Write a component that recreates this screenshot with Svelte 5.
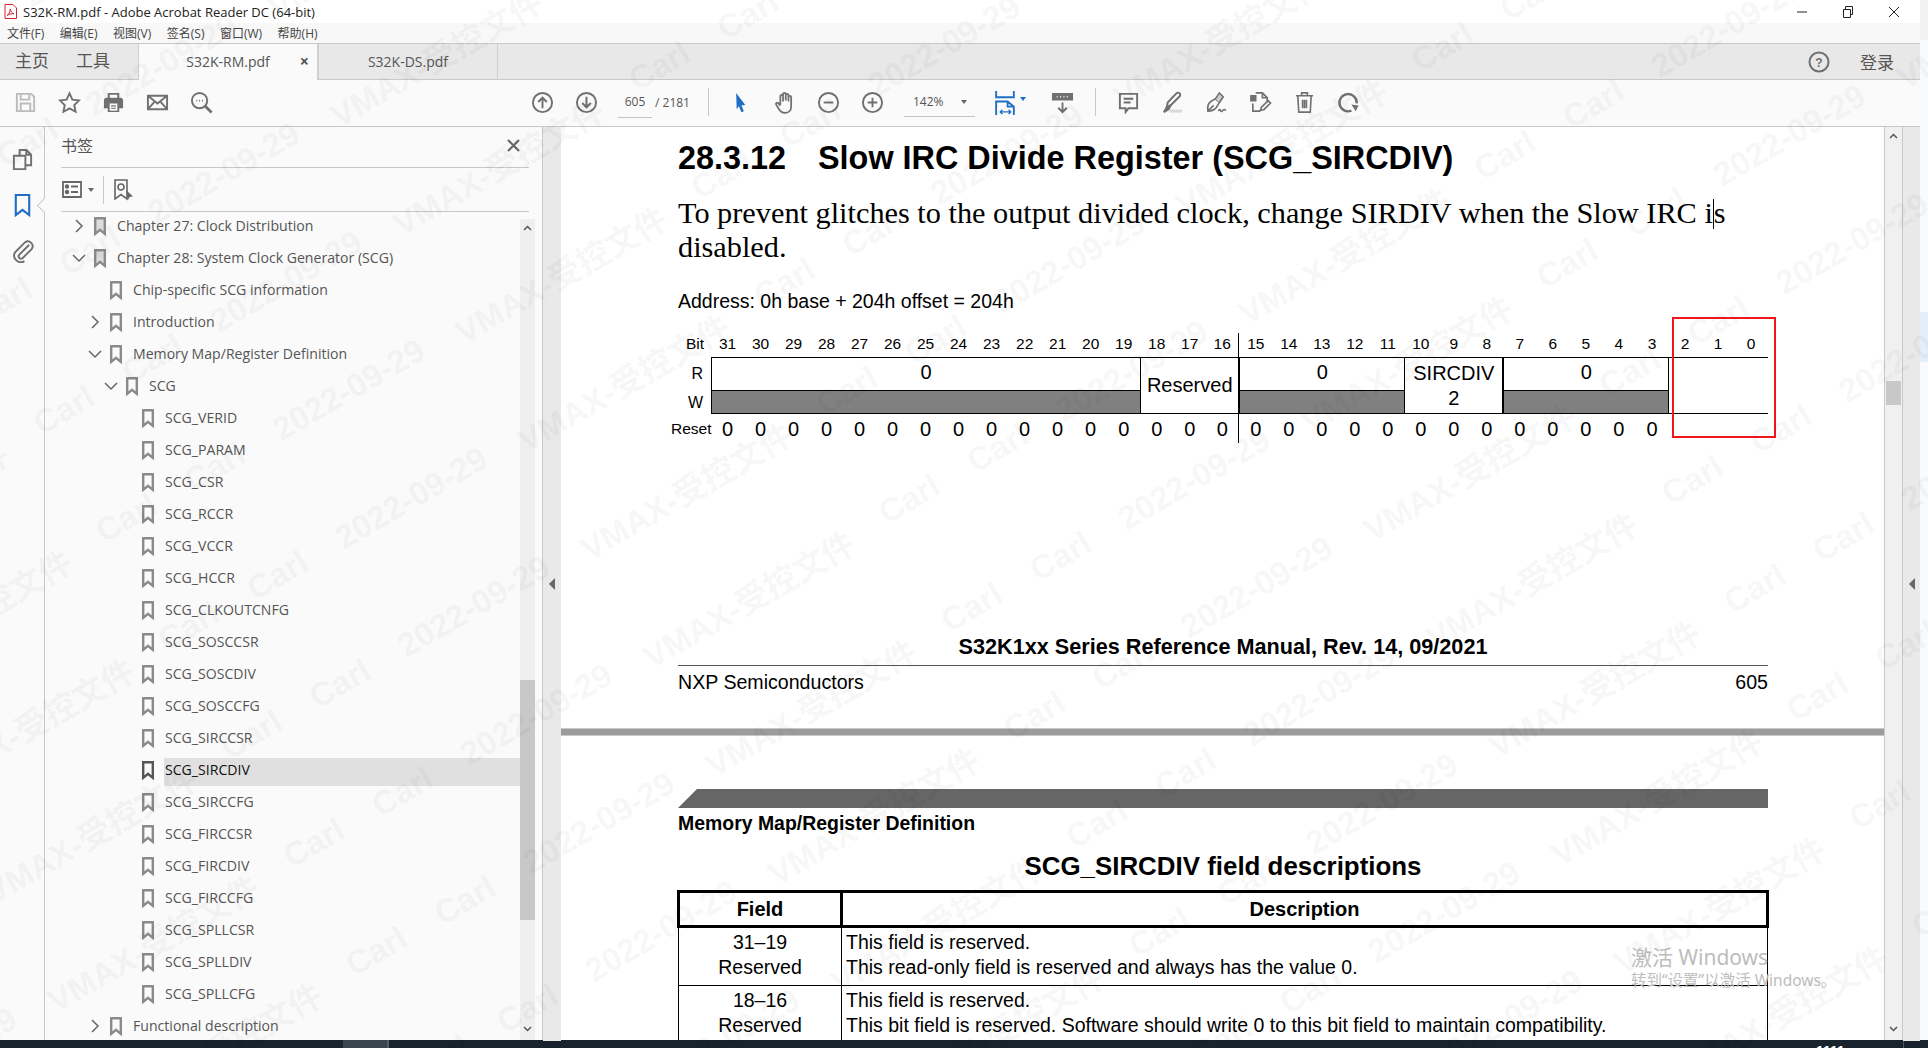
<script>
  const menus = ["文件(F)", "编辑(E)", "视图(V)", "签名(S)", "窗口(W)", "帮助(H)"];

  const tree = [
    { label: "Chapter 27: Clock Distribution", level: 0, chev: "r", fill: true },
    { label: "Chapter 28: System Clock Generator (SCG)", level: 0, chev: "d", fill: true },
    { label: "Chip-specific SCG information", level: 1 },
    { label: "Introduction", level: 1, chev: "r" },
    { label: "Memory Map/Register Definition", level: 1, chev: "d" },
    { label: "SCG", level: 2, chev: "d" },
    { label: "SCG_VERID", level: 3 },
    { label: "SCG_PARAM", level: 3 },
    { label: "SCG_CSR", level: 3 },
    { label: "SCG_RCCR", level: 3 },
    { label: "SCG_VCCR", level: 3 },
    { label: "SCG_HCCR", level: 3 },
    { label: "SCG_CLKOUTCNFG", level: 3 },
    { label: "SCG_SOSCCSR", level: 3 },
    { label: "SCG_SOSCDIV", level: 3 },
    { label: "SCG_SOSCCFG", level: 3 },
    { label: "SCG_SIRCCSR", level: 3 },
    { label: "SCG_SIRCDIV", level: 3, selected: true },
    { label: "SCG_SIRCCFG", level: 3 },
    { label: "SCG_FIRCCSR", level: 3 },
    { label: "SCG_FIRCDIV", level: 3 },
    { label: "SCG_FIRCCFG", level: 3 },
    { label: "SCG_SPLLCSR", level: 3 },
    { label: "SCG_SPLLDIV", level: 3 },
    { label: "SCG_SPLLCFG", level: 3 },
    { label: "Functional description", level: 1, chev: "r" }
  ];

  const bits = Array.from({ length: 32 }, (_, i) => 31 - i);
  const wmRows = Array.from({ length: 20 }, (_, i) => i);
  const wmCols = Array.from({ length: 7 }, (_, i) => i);
</script>

<div class="app">
  <div class="top">
    <div class="window">
      <div class="titlebar">
        <svg class="pdf" width="13" height="15" viewBox="0 0 13 15">
          <path d="M1 .5h8l3.500 3.500v10.500H1z" fill="#fff" stroke="#d8232a" />
          <path d="M3 11.500c2-1 3-3.500 3.300-6.500.5 2.500 1.500 4 3.700 4.800-2.500-.3-5 .3-7 1.700z" fill="none" stroke="#d8232a" />
        </svg>
        <span class="title-text">S32K-RM.pdf - Adobe Acrobat Reader DC (64-bit)</span>
        <div class="winctl">
          <svg width="12" height="12" viewBox="0 0 12 12"><path d="M1 6h10" stroke="#222" /></svg>
          <svg width="12" height="12" viewBox="0 0 12 12" fill="none" stroke="#222"><path d="M1.500 3.500h7v8h-7zM3.500 3.500v-3h7v8h-2" /></svg>
          <svg width="12" height="12" viewBox="0 0 12 12" stroke="#222"><path d="M1 1l10 10M11 1L1 11" /></svg>
        </div>
      </div>

      <div class="menubar">
        {#each menus as m}<span>{m}</span>{/each}
      </div>

      <div class="tabbar">
        <span class="nav-tab first">主页</span>
        <span class="nav-tab">工具</span>
        <div class="doc-tab active">
          <span>S32K-RM.pdf</span>
          <b class="tab-x">×</b>
        </div>
        <div class="doc-tab"><span>S32K-DS.pdf</span></div>
        <div class="tab-right">
          <svg width="22" height="22" viewBox="0 0 22 22">
            <circle cx="11" cy="11" r="9.500" fill="none" stroke="#707070" stroke-width="2" />
            <text x="11" y="15.500" text-anchor="middle" font-size="12" font-weight="700" fill="#707070" font-family="Liberation Sans">?</text>
          </svg>
          <span class="login">登录</span>
        </div>
      </div>

      <div class="toolbar">
        <div class="tb save">
          <svg viewBox="0 0 24 24" class="ic light"><path d="M3 3h15l3 3v15H3zM7 3v6h9V3M7 21v-8h10v8" /></svg>
        </div>
        <div class="tb">
          <svg viewBox="0 0 24 24" class="ic"><path d="M12 2.500L15 9l7 .8-5 4.900 1.300 7-6.300-3.500-6.300 3.500 1.300-7-5-4.900L9 9z" /></svg>
        </div>
        <div class="tb">
          <svg viewBox="0 0 24 24" class="ic"><path d="M7 8V3h10v5" /><path d="M5 8h14a2 2 0 0 1 2 2v7h-4v4H7v-4H3v-7a2 2 0 0 1 2-2z" fill="#707070" /><path d="M8 13h8v7.500H8z" fill="#fafafa" stroke="none" /><path d="M9.500 15.500h5M9.500 18h5" stroke-width="1.200" /></svg>
        </div>
        <div class="tb">
          <svg viewBox="0 0 24 24" class="ic"><path d="M2 5h20v14H2zM2 5l10 8 10-8M2 19l7.500-8.500M22 19l-7.500-8.500" /></svg>
        </div>
        <div class="tb">
          <svg viewBox="0 0 24 24" class="ic"><circle cx="10" cy="10" r="8" /><path d="M16 16l6.500 6.500" stroke-width="3" /><path d="M6.500 10h1M9.500 10h1M12.500 10h1" /></svg>
        </div>

        <div class="tb gap-page">
          <svg viewBox="0 0 24 24" class="ic"><circle cx="12" cy="12" r="10" /><path d="M12 18V7M7.500 11.500L12 7l4.500 4.500" /></svg>
        </div>
        <div class="tb">
          <svg viewBox="0 0 24 24" class="ic"><circle cx="12" cy="12" r="10" /><path d="M12 6v11M7.500 12.500L12 17l4.500-4.500" /></svg>
        </div>
        <div class="page-box">605</div>
        <div class="page-total">/ 2181</div>
        <div class="tb-sep first-sep"></div>
        <div class="tb cursor">
          <svg viewBox="0 0 24 24" class="ic"><path d="M7.500 2l9.500 12.500-4 .5 2.500 6-2.500 1.200-2.700-6.200-2.300 3z" fill="#1f6fc4" stroke="none" /></svg>
        </div>
        <div class="tb">
          <svg viewBox="0 0 24 24" class="ic thin big"><path d="M8 14V6a1.300 1.300 0 0 1 2.600 0v5M10.600 10V4a1.300 1.300 0 0 1 2.600 0v6M13.200 10V5a1.300 1.300 0 0 1 2.600 0v6M15.800 11V7a1.300 1.300 0 0 1 2.600 0v9c0 3.500-2.500 6-6 6s-4.500-1.500-6-4L4 14c-.8-1.300.8-2.500 2-1.400L8 15" /></svg>
        </div>
        <div class="tb">
          <svg viewBox="0 0 24 24" class="ic"><circle cx="12" cy="12" r="10" /><path d="M7 12h10" /></svg>
        </div>
        <div class="tb">
          <svg viewBox="0 0 24 24" class="ic"><circle cx="12" cy="12" r="10" /><path d="M7 12h10M12 7v10" /></svg>
        </div>
        <div class="zoom-box"><span>142%</span><i class="tri"></i></div>
        <div class="tb fit">
          <svg viewBox="0 0 24 24" class="ic blue big"><path d="M3 1v6h17V1M3 24V11h11l6 5v8M14 11v5h6" stroke-width="1.800" /><path d="M7 21h10M9 19l-2 2 2 2M15 19l2 2-2 2" stroke-width="1.300" /></svg>
          <i class="tri blue-tri"></i>
        </div>
        <div class="tb scroll">
          <svg viewBox="0 0 24 24" class="ic"><path d="M2 3h20v6H2z" fill="#707070" /><path d="M6 6h1M9.500 6h1M13 6h1M16.500 6h1" stroke="#fafafa" stroke-width="1.500" /><path d="M12 12v10M7.500 17.500L12 22l4.500-4.500" /></svg>
        </div>
        <div class="tb-sep"></div>
        <div class="tb">
          <svg viewBox="0 0 24 24" class="ic"><path d="M3 3h18v15h-9l-3 4v-4H3zM7 8h10M7 12h7" /></svg>
        </div>
        <div class="tb">
          <svg viewBox="0 0 24 24" class="ic"><path d="M6 17l1-5L16 2.500a2 2 0 0 1 3.500 3L10 15z" /><path d="M3 22l3-5 4-2-2 4z" fill="#707070" /><path d="M9 21h13" stroke="#d9d9d9" stroke-width="3" /></svg>
        </div>
        <div class="tb">
          <svg viewBox="0 0 24 24" class="ic thin"><path d="M3 21c-.5-4 0-8 3-10l5-3 4 4-3 5c-2 3-5 4-9 4zM3 21l6-6" /><path d="M11 8l4-6 4 4-4 6" fill="#d0d0d0" /><path d="M14 21c1-2 2-2 2.500-.5s1.500 1 2.500-.5 1.500 0 3 0" /></svg>
        </div>
        <div class="tb">
          <svg viewBox="0 0 24 24" class="ic thin"><path d="M2 5h5v5H2z" fill="#707070" /><path d="M7 2h7l5 5v5M14 2v5h5M4 13v8h8" /><path d="M12 20l1-3 7-7 2.500 2.500-7 7z" /></svg>
        </div>
        <div class="tb">
          <svg viewBox="0 0 24 24" class="ic thin"><path d="M3 5h18M9 5V2h6v3M5 5l1 17h12l1-17M10 9v9M12 9v9M14 9v9" /></svg>
        </div>
        <div class="tb">
          <svg viewBox="0 0 24 24" class="ic"><path d="M15 20.500A9 9 0 1 1 20.500 13" stroke-width="2.500" /><path d="M15 14l7.500 1-3 6z" fill="#707070" stroke="none" /></svg>
        </div>
      </div>

      <div class="main">
        <div class="rail">
          <svg viewBox="0 0 24 24" class="rail-ic"><path d="M9 8V2h7l5 5v11h-6M16 2v5h5" fill="none" /><path d="M3 8h12v14H3z" fill="none" /></svg>
          <svg viewBox="0 0 24 24" class="rail-ic bm"><path d="M5 1h14v21l-7-5.500L5 22z" /></svg>
          <svg viewBox="0 0 24 24" class="rail-ic clip"><path d="M19 6L8.500 16.500a2.500 2.500 0 0 0 3.500 3.500L21.500 10.500a5 5 0 0 0-7-7L4 14a7 7 0 0 0 10 9" transform="translate(0 -1)" /></svg>
        </div>

        <div class="panel">
          <div class="panel-head">
            <span class="panel-title">书签</span>
            <svg width="13" height="13" viewBox="0 0 13 13" stroke="#666" stroke-width="2.200"><path d="M1 1l11 11M12 1L1 12" /></svg>
          </div>
          <div class="panel-tools">
            <svg width="20" height="17" viewBox="0 0 20 17" fill="none" stroke="#666" stroke-width="1.800">
              <path d="M1 1h18v15H1z" /><path d="M9 5.500h7M9 11h7" /><circle cx="5" cy="5.500" r="1.300" fill="#666" /><circle cx="5" cy="11" r="1.300" fill="#666" />
            </svg>
            <i class="tri small"></i>
            <div class="tool-sep"></div>
            <svg width="20" height="22" viewBox="0 0 20 22" fill="none" stroke="#666" stroke-width="1.600">
              <path d="M1 1h12v19l-6-4.500L1 20z" /><circle cx="7" cy="8" r="3" />
              <path d="M12 11l7 6.500-3.500.5-1.500 3z" fill="#666" stroke="none" />
            </svg>
          </div>

          <div class="panel-body">
            <div class="tree">
              {#each tree as row}
                <div class="row" class:l1={row.level === 1} class:l2={row.level === 2} class:l3={row.level === 3} class:sel={row.selected}>
                  <span class="chev">
                    {#if row.chev === "r"}
                      <svg width="10" height="14" viewBox="0 0 10 14" fill="none" stroke="#666" stroke-width="1.500"><path d="M2 1l6 6-6 6" /></svg>
                    {:else if row.chev === "d"}
                      <svg width="14" height="10" viewBox="0 0 14 10" fill="none" stroke="#666" stroke-width="1.500"><path d="M1 2l6 6 6-6" /></svg>
                    {/if}
                  </span>
                  <svg class="mark" width="12" height="19" viewBox="0 0 12 19">
                    <path d="M1.200 1.200h9.600v15.600l-4.800-4-4.800 4z" fill={row.fill ? "#dcdcdc" : "none"} stroke={row.selected ? "#555" : "#8a8a8a"} stroke-width="2.400" />
                  </svg>
                  <span class="label">{row.label}</span>
                </div>
              {/each}
            </div>
            <div class="pscroll">
              <svg class="sarrow" width="9" height="6" viewBox="0 0 9 6" fill="none" stroke="#555" stroke-width="1.500"><path d="M1 5l3.500-3.500L8 5" /></svg>
              <div class="pthumb"></div>
              <svg class="sarrow down" width="9" height="6" viewBox="0 0 9 6" fill="none" stroke="#555" stroke-width="1.500"><path d="M1 1l3.500 3.500L8 1" /></svg>
            </div>
          </div>
        </div>

        <div class="collapse"><i class="left-tri"></i></div>

        <div class="doc">
          <div class="page">
            <h1 class="heading"><span class="num">28.3.12</span>Slow IRC Divide Register (SCG_SIRCDIV)</h1>
            <p class="para">To prevent glitches to the output divided clock, change SIRDIV when the Slow IRC i<span class="caret"></span>s disabled.</p>
            <div class="addr">Address: 0h base + 204h offset = 204h</div>

            <div class="reg">
              <div class="lab">Bit</div>
              {#each bits as b}
                <div class="bit" class:mid={b === 16}>{b}</div>
              {/each}

              <div class="lab r">R</div>
              <div class="f-top a">0</div>
              <div class="f-span b"><span>Reserved</span></div>
              <div class="f-top c">0</div>
              <div class="f-span d"><span>SIRCDIV</span><span>2</span></div>
              <div class="f-top e">0</div>
              <div class="f-blank"></div>

              <div class="lab w">W</div>
              <div class="f-w a"></div>
              <div class="f-w c"></div>
              <div class="f-w e"></div>

              <div class="lab rst">Reset</div>
              {#each bits as b}
                <div class="zero" class:mid={b === 16}>{b > 2 ? 0 : ""}</div>
              {/each}

              <div class="red"></div>
            </div>

            <div class="manual">S32K1xx Series Reference Manual, Rev. 14, 09/2021</div>
            <div class="foot"><span>NXP Semiconductors</span><span>605</span></div>
          </div>

          <div class="page-gap"></div>

          <div class="page">
            <div class="slant"></div>
            <div class="section">Memory Map/Register Definition</div>
            <div class="caption">SCG_SIRCDIV field descriptions</div>
            <table class="fields">
              <thead>
                <tr><th class="col-a">Field</th><th>Description</th></tr>
              </thead>
              <tbody>
                <tr>
                  <td class="col-a">31–19<br />Reserved</td>
                  <td>This field is reserved.<br />This read-only field is reserved and always has the value 0.</td>
                </tr>
                <tr>
                  <td class="col-a">18–16<br />Reserved</td>
                  <td>This field is reserved.<br />This bit field is reserved. Software should write 0 to this bit field to maintain compatibility.</td>
                </tr>
              </tbody>
            </table>
          </div>
        </div>

        <div class="vscroll">
          <svg width="9" height="6" viewBox="0 0 9 6" fill="none" stroke="#555" stroke-width="1.500"><path d="M1 5l3.500-3.500L8 5" /></svg>
          <div class="vthumb"></div>
          <svg class="sarrow down" width="9" height="6" viewBox="0 0 9 6" fill="none" stroke="#555" stroke-width="1.500"><path d="M1 1l3.500 3.500L8 1" /></svg>
        </div>
        <div class="collapse right"><i class="left-tri"></i></div>
      </div>
    </div>

    <div class="edge">
      <div class="edge-top"></div>
      <div class="edge-blue"></div>
    </div>
  </div>

  <div class="taskbar">
    <div class="task-active"></div>
    <div class="task-clock"><span>1111</span></div>
    <div class="task-line"></div>
  </div>

  <div class="activate">
    <div class="a1">激活 Windows</div>
    <div class="a2">转到“设置”以激活 Windows。</div>
  </div>

  <div class="wm">
    <div class="wm-inner">
      {#each wmRows as r}
        <div class="wm-line">
          {#each wmCols as c}
            <span>VMAX-受控文件</span><span>Carl</span><span>Carl</span><span>2022-09-29</span>
          {/each}
        </div>
      {/each}
    </div>
  </div>
</div>

<style>
  :global(body) {
    margin: 0;
    background: #fff;
  }

  .app {
    position: relative;
    display: flex;
    flex-direction: column;
    width: 1928px;
    height: 1048px;
    overflow: hidden;
    font-family: "Open Sans", "Noto Sans", "Noto Sans CJK SC", sans-serif;
    color: #444;
  }

  .top {
    display: flex;
    flex: 1;
    min-height: 0;
  }

  .window {
    display: flex;
    flex-direction: column;
    width: 1920px;
    min-height: 0;
  }

  .edge {
    flex: 1;
    background: #f8fafd;
    display: flex;
    flex-direction: column;
  }

  .edge-top {
    height: 40px;
    background: #f2f2f2;
  }

  .edge-blue {
    height: 50px;
    margin-top: 272px;
    background: #e4eefb;
  }

  /* window chrome */
  .titlebar {
    display: flex;
    align-items: center;
    height: 23px;
    background: #fff;
    padding-left: 4px;
  }

  .pdf {
    margin-right: 6px;
  }

  .title-text {
    font-size: 13px;
    color: #222;
  }

  .winctl {
    display: flex;
    gap: 34px;
    margin-left: auto;
    margin-right: 20px;
  }

  .menubar {
    display: flex;
    align-items: center;
    gap: 15.500px;
    height: 20px;
    padding-left: 7px;
    background: #f8f8f8;
    font-size: 12px;
    color: #444;
  }

  .tabbar {
    display: flex;
    align-items: stretch;
    height: 37px;
    box-sizing: border-box;
    border-top: 1px solid #c8c8c8;
    border-bottom: 1px solid #c8c8c8;
    background: #e8e8e8;
  }

  .nav-tab {
    font-size: 17px;
    line-height: 34px;
    width: 61px;
    text-align: left;
    color: #555;
  }

  .nav-tab.first {
    margin-left: 15px;
  }

  .doc-tab {
    position: relative;
    width: 180px;
    margin-bottom: -1px;
    box-sizing: border-box;
    border-left: 1px solid #d0d0d0;
    border-right: 1px solid #d0d0d0;
    text-align: center;
    font-size: 14px;
    line-height: 35px;
    color: #555;
  }

  .doc-tab.active {
    margin-left: 1px;
    background: #fafafa;
  }

  .tab-x {
    position: absolute;
    right: 8px;
    top: 0;
    font-size: 16px;
    color: #555;
  }

  .tab-right {
    display: flex;
    align-items: center;
    margin-left: auto;
    margin-right: 26px;
    gap: 30px;
  }

  .login {
    font-size: 17px;
    color: #555;
  }

  .toolbar {
    display: flex;
    align-items: center;
    height: 47px;
    box-sizing: border-box;
    border-bottom: 1px solid #c8c8c8;
    background: #fafafa;
    padding: 0 0 2px 3px;
    flex-shrink: 0;
  }

  .tb {
    display: flex;
    align-items: center;
    justify-content: center;
    width: 44px;
    height: 44px;
    flex-shrink: 0;
  }

  .ic {
    width: 23px;
    height: 23px;
    fill: none;
    stroke: #707070;
    stroke-width: 2;
  }

  .ic.big {
    width: 25px;
    height: 25px;
  }

  .ic.light {
    stroke: #bcbcbc;
  }

  .ic.thin {
    stroke-width: 1.700;
  }

  .ic.blue {
    stroke: #1f6fc4;
  }

  .gap-page {
    margin-left: 297px;
  }

  .page-box {
    width: 34px;
    margin-left: 10px;
    border-bottom: 1px solid #c4c4c4;
    text-align: center;
    font-size: 12px;
    line-height: 30px;
    color: #555;
  }

  .page-total {
    margin-left: 3px;
    width: 53px;
    font-size: 12px;
    color: #555;
  }

  .tb-sep {
    width: 1px;
    height: 28px;
    background: #c8c8c8;
    flex-shrink: 0;
  }

  .first-sep + .cursor {
    margin-left: 9px;
  }

  .zoom-box {
    display: flex;
    align-items: center;
    justify-content: space-between;
    box-sizing: border-box;
    width: 71px;
    height: 30px;
    margin-left: 10px;
    padding: 0 8px 0 9px;
    border-bottom: 1px solid #c4c4c4;
    font-size: 12px;
    color: #555;
  }

  .tri {
    display: block;
    width: 0;
    height: 0;
    border-left: 3.500px solid transparent;
    border-right: 3.500px solid transparent;
    border-top: 4px solid #666;
  }

  .tri.small {
    margin-left: 6px;
  }

  .tri.blue-tri {
    border-top-color: #1f6fc4;
    margin-left: 2px;
    margin-top: -6px;
  }

  .fit {
    margin-left: 9px;
    width: 46px;
    justify-content: flex-start;
    padding-left: 9px;
    box-sizing: border-box;
  }

  .scroll {
    margin-left: 10px;
  }

  .scroll + .tb-sep {
    margin-left: 11px;
    margin-right: 10px;
  }

  /* main area */
  .main {
    position: relative;
    display: flex;
    flex: 1;
    min-height: 0;
  }

  .rail {
    position: relative;
    display: flex;
    flex-direction: column;
    align-items: center;
    gap: 23px;
    box-sizing: border-box;
    width: 45px;
    padding: 21px 0 0 0;
    background: #fafafa;
    border-right: 1px solid #c8c8c8;
    flex-shrink: 0;
  }

  .rail::after {
    content: "";
    position: absolute;
    right: -6px;
    top: 73px;
    width: 10px;
    height: 10px;
    background: #fafafa;
    border-left: 1px solid #c8c8c8;
    border-bottom: 1px solid #c8c8c8;
    transform: rotate(45deg);
  }

  .rail-ic {
    width: 23px;
    height: 23px;
    fill: none;
    stroke: #707070;
    stroke-width: 2;
  }

  .rail-ic.bm {
    stroke: #1f6fc4;
    stroke-width: 2.200;
  }

  .panel {
    display: flex;
    flex-direction: column;
    width: 497px;
    background: #fafafa;
    border-right: 1px solid #c8c8c8;
    min-height: 0;
    flex-shrink: 0;
  }

  .panel-head {
    display: flex;
    align-items: center;
    justify-content: space-between;
    height: 41px;
    box-sizing: border-box;
    margin: 0 13px 0 16px;
    padding: 0 9px 4px 0;
    border-bottom: 1px solid #c8c8c8;
  }

  .panel-title {
    font-size: 16px;
    color: #555;
  }

  .panel-tools {
    display: flex;
    align-items: center;
    height: 44px;
    box-sizing: border-box;
    margin: 0 13px 0 16px;
    padding-left: 1px;
    border-bottom: 1px solid #c8c8c8;
  }

  .tool-sep {
    width: 1px;
    height: 28px;
    margin: 0 10px 0 9px;
    background: #c8c8c8;
  }

  .panel-body {
    display: flex;
    flex: 1;
    min-height: 0;
  }

  .tree {
    flex: 1;
    margin-top: -2px;
    padding-left: 26px;
    overflow: hidden;
  }

  .row {
    display: flex;
    align-items: flex-end;
    height: 32px;
    box-sizing: border-box;
  }

  .row.l1 {
    padding-left: 16px;
  }

  .row.l2 {
    padding-left: 32px;
  }

  .row.l3 {
    padding-left: 48px;
  }

  .chev {
    display: flex;
    align-items: center;
    justify-content: center;
    flex-shrink: 0;
    width: 16px;
    height: 24px;
    margin: 0 7px 4px 0;
  }

  .mark {
    flex-shrink: 0;
    margin-bottom: 6px;
  }

  .label {
    flex: 1;
    height: 28px;
    margin-left: 10px;
    padding-left: 1px;
    font-size: 14.100px;
    line-height: 24px;
    color: #555;
    white-space: nowrap;
  }

  .row.sel .label {
    background: #e0e0e0;
    color: #111;
  }

  .pscroll {
    display: flex;
    flex-direction: column;
    align-items: center;
    width: 15px;
    margin: 7px 7px 0 0;
    background: #efefef;
  }

  .sarrow {
    margin-top: 6px;
  }

  .sarrow.down {
    margin-top: auto;
    margin-bottom: 8px;
  }

  .pthumb {
    width: 15px;
    height: 240px;
    margin-top: 449px;
    background: #c8c8c8;
  }

  .collapse {
    display: flex;
    align-items: center;
    justify-content: center;
    width: 18px;
    height: 913px;
    flex-shrink: 0;
    background: #e9e9e9;
    padding-bottom: 1px;
  }

  .collapse.right {
    width: 17px;
  }

  .left-tri {
    display: block;
    width: 0;
    height: 0;
    border-top: 6px solid transparent;
    border-bottom: 6px solid transparent;
    border-right: 6px solid #666;
  }

  .doc {
    flex: 1;
    min-width: 0;
    overflow: hidden;
    background: #fff;
    color: #000;
    font-family: "Liberation Sans", Arial, sans-serif;
  }

  .page {
    padding: 0 116px 0 117px;
  }

  .heading {
    margin: 11px 0 0;
    font-size: 32.400px;
    line-height: 40px;
    font-weight: 700;
    white-space: nowrap;
  }

  .num {
    display: inline-block;
    width: 140px;
  }

  .para {
    margin: 18px 0 0;
    width: 1060px;
    font-family: "Liberation Serif", serif;
    font-size: 30.300px;
    line-height: 34px;
  }

  .caret {
    display: inline-block;
    width: 0;
    height: 30px;
    vertical-align: -6px;
    border-left: 1px solid #000;
  }

  .addr {
    margin-top: 25px;
    font-size: 19.500px;
    line-height: 24px;
  }

  /* register diagram */
  .reg {
    position: relative;
    display: grid;
    grid-template-columns: 40px repeat(32, 33.030px);
    grid-template-rows: 24px 34px 23px 29px;
    margin: 20px 0 0 -7px;
    font-size: 15.500px;
  }

  .lab {
    grid-column: 1;
    text-align: right;
    padding-right: 7px;
    align-self: center;
    white-space: nowrap;
  }

  .lab:first-child {
    align-self: start;
    line-height: 22px;
  }

  .lab.r,
  .f-top {
    grid-row: 2;
  }

  .lab.w {
    grid-row: 3;
  }

  .lab.r,
  .lab.w {
    font-size: 16px;
    padding-right: 8px;
  }

  .lab.rst {
    grid-row: 4;
    padding-right: 4px;
  }

  .bit,
  .zero {
    text-align: center;
    align-self: stretch;
    box-sizing: border-box;
    line-height: 22px;
  }

  .zero {
    font-size: 20px;
    line-height: 31px;
  }

  .bit.mid,
  .zero.mid {
    border-right: 1px solid #000;
  }

  .f-top,
  .f-span,
  .f-blank {
    box-sizing: border-box;
    border-top: 1.500px solid #000;
    border-left: 1.500px solid #000;
    font-size: 20px;
    text-align: center;
  }

  .f-top {
    line-height: 28px;
    border-bottom: 1px solid #000;
  }

  .f-span {
    grid-row: 2 / 4;
    display: flex;
    flex-direction: column;
    justify-content: center;
    line-height: 25px;
    border-bottom: 1.500px solid #000;
  }

  .f-w {
    grid-row: 3;
    background: #808080;
    border-left: 1.500px solid #000;
    border-bottom: 1.500px solid #000;
    box-sizing: border-box;
  }

  .f-blank {
    grid-row: 2 / 4;
    grid-column: 31 / 34;
    border-bottom: 1.500px solid #000;
  }

  .a {
    grid-column: 2 / 15;
  }

  .b {
    grid-column: 15 / 18;
    border-right: 1px solid #000;
  }

  .c {
    grid-column: 18 / 23;
  }

  .d {
    grid-column: 23 / 26;
    border-right: 1px solid #000;
  }

  .e {
    grid-column: 26 / 31;
  }

  .red {
    position: absolute;
    left: 1001px;
    top: -16px;
    width: 104px;
    height: 121px;
    box-sizing: border-box;
    border: 2.500px solid #f2151c;
  }

  .manual {
    margin-top: 191px;
    font-size: 21.650px;
    font-weight: 700;
    line-height: 26px;
    text-align: center;
    padding-bottom: 5px;
    border-bottom: 1px solid #555;
  }

  .foot {
    display: flex;
    justify-content: space-between;
    margin-top: 4px;
    font-size: 19.600px;
    line-height: 24px;
  }

  .page-gap {
    height: 6px;
    margin-top: 34px;
    background: #9c9c9c;
    border-top: 1px solid #c8c8c8;
    border-bottom: 1px solid #c8c8c8;
  }

  .slant {
    height: 19px;
    margin-top: 53px;
    background: #666;
    clip-path: polygon(19px 0, 100% 0, 100% 100%, 0 100%);
  }

  .section {
    margin-top: 3px;
    font-size: 19.450px;
    font-weight: 700;
    line-height: 24px;
  }

  .caption {
    margin-top: 14px;
    font-size: 25.900px;
    font-weight: 700;
    line-height: 34px;
    text-align: center;
  }

  .fields {
    width: 1092px;
    margin-top: 7px;
    margin-left: -1px;
    border-collapse: collapse;
    table-layout: fixed;
    font-size: 19.500px;
    line-height: 24.500px;
  }

  .col-a {
    width: 160px;
    text-align: center;
  }

  .fields th {
    height: 32px;
    padding: 0;
    border: 3px solid #000;
    font-size: 20px;
    line-height: 28px;
  }

  .fields td {
    padding: 2px 4px 6px;
    border: 1px solid #000;
    vertical-align: top;
    white-space: nowrap;
  }

  .vscroll {
    display: flex;
    flex-direction: column;
    align-items: center;
    box-sizing: border-box;
    width: 19px;
    height: 913px;
    padding-top: 6px;
    background: #f0f0f0;
    border-left: 1px solid #c8c8c8;
    border-right: 1px solid #c8c8c8;
    flex-shrink: 0;
  }

  .vthumb {
    width: 15px;
    height: 24px;
    margin-top: 242px;
    background: #c8c8c8;
  }

  /* taskbar */
  .taskbar {
    display: flex;
    align-items: stretch;
    height: 8px;
    background: #18232e;
    flex-shrink: 0;
    overflow: hidden;
  }

  .task-active {
    width: 44px;
    margin-left: 343px;
    background: #3b4550;
    border-right: 2px solid #55606a;
  }

  .task-clock {
    margin-left: auto;
    width: 87px;
    font-size: 14px;
    line-height: 14px;
    color: #fff;
    font-weight: 700;
    font-family: "Liberation Sans", sans-serif;
    padding-top: 4px;
    box-sizing: border-box;
  }

  .task-line {
    width: 1px;
    margin-right: 24px;
    background: #4a545e;
  }

  /* overlays */
  .activate {
    position: absolute;
    left: 1631px;
    top: 943px;
    color: #bdbdbd;
    font-family: "Noto Sans", "Noto Sans CJK SC", sans-serif;
    pointer-events: none;
    white-space: nowrap;
  }

  .a1 {
    font-size: 21px;
    line-height: 28px;
  }

  .a2 {
    font-size: 15.500px;
    line-height: 19px;
  }

  .wm {
    position: absolute;
    inset: 0;
    overflow: hidden;
    pointer-events: none;
  }

  .wm-inner {
    position: absolute;
    left: 449px;
    top: 310px;
    width: 4900px;
    transform-origin: 0 0;
    transform: rotate(-30deg) translate(-2067px, -875px);
    color: rgba(0, 0, 0, 0.05);
    font-family: "Liberation Sans", "Noto Sans CJK SC", sans-serif;
    font-size: 33px;
    font-weight: 700;
  }

  .wm-line {
    display: flex;
    gap: 38px;
    height: 125px;
    white-space: nowrap;
  }
</style>
